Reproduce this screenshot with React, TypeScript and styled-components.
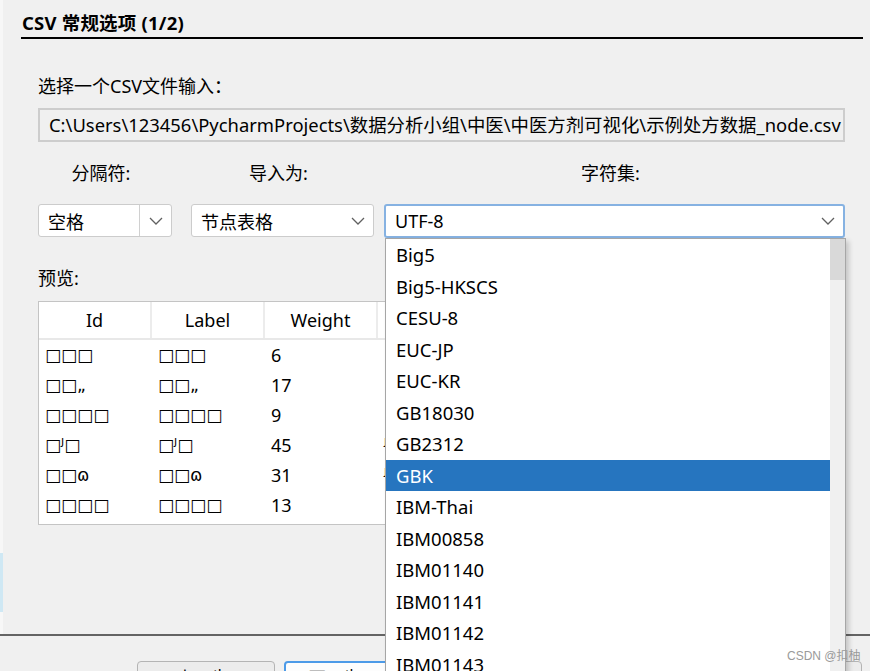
import React from 'react';
import styled, { createGlobalStyle } from 'styled-components';

const FONT = `"Noto Sans", "Noto Sans CJK SC", sans-serif`;

const GlobalStyle = createGlobalStyle`
  html, body {
    margin: 0;
    padding: 0;
    background: #f0f0f0;
  }
  body {
    font-family: ${FONT};
    color: #000;
  }
`;

const encodings = [
  'Big5',
  'Big5-HKSCS',
  'CESU-8',
  'EUC-JP',
  'EUC-KR',
  'GB18030',
  'GB2312',
  'GBK',
  'IBM-Thai',
  'IBM00858',
  'IBM01140',
  'IBM01141',
  'IBM01142',
  'IBM01143',
  'IBM01144',
];

const rows = [
  ['□□□', '□□□', '6', '□□'],
  ['□□„', '□□„', '17', '□□'],
  ['□□□□', '□□□□', '9', '□□'],
  ['□ᴶ□', '□ᴶ□', '45', 'ᴶ□'],
  ['□□ɷ', '□□ɷ', '31', 'ᴶ□'],
  ['□□□□', '□□□□', '13', '□□'],
];

const Chevron = () => (
  <svg width="14" height="8" viewBox="0 0 14 8">
    <path d="M1 1 L7 7 L13 1" fill="none" stroke="#606060" strokeWidth="1.3" />
  </svg>
);

const App: React.FC = () => {
  return (
    <Page>
      <GlobalStyle />
      <EdgeStrip>
        <EdgeGlow />
      </EdgeStrip>
      <Main>
        <Header>
          <Title>CSV 常规选项 (1/2)</Title>
        </Header>
        <Body>
          <FileLabel>选择一个CSV文件输入：</FileLabel>
          <PathField>
            C:\Users\123456\PycharmProjects\数据分析小组\中医\中医方剂可视化\示例处方数据_node.csv
          </PathField>
          <FieldRow>
            <Field $width={134} $gap={19}>
              <FieldLabel>分隔符:</FieldLabel>
              <Combo>
                <ComboText>空格</ComboText>
                <ComboButton $split>
                  <Chevron />
                </ComboButton>
              </Combo>
            </Field>
            <Field $width={183} $gap={10}>
              <FieldLabel>导入为:</FieldLabel>
              <Combo>
                <ComboText>节点表格</ComboText>
                <ComboButton>
                  <Chevron />
                </ComboButton>
              </Combo>
            </Field>
            <Field $width={461} $gap={0}>
              <FieldLabel>字符集:</FieldLabel>
              <Combo $focused>
                <ComboText>UTF-8</ComboText>
                <ComboButton>
                  <Chevron />
                </ComboButton>
              </Combo>
            </Field>
          </FieldRow>
          <PreviewLabel>预览:</PreviewLabel>
          <Table>
            <HeadRow>
              <HeadCell>Id</HeadCell>
              <HeadCell>Label</HeadCell>
              <HeadCell>Weight</HeadCell>
              <HeadCell>Type</HeadCell>
            </HeadRow>
            {rows.map((r, i) => (
              <Row key={i}>
                {r.map((c, j) => (
                  <Cell key={j} $tofu={j !== 2}>
                    {c}
                  </Cell>
                ))}
              </Row>
            ))}
          </Table>
        </Body>
      </Main>
      <Footer>
        <Button>&lt; 上一步(B)</Button>
        <Button $primary>下一步(N) &gt;</Button>
        <Button>完成(F)</Button>
        <Spacer />
        <Button>取消</Button>
      </Footer>

      <DropList>
        <Items>
          {encodings.map((e) => (
            <Item key={e} $selected={e === 'GBK'}>
              {e}
            </Item>
          ))}
        </Items>
        <ScrollTrack>
          <ScrollThumb />
        </ScrollTrack>
      </DropList>
      <Watermark>CSDN @扣柚</Watermark>
    </Page>
  );
};

export default App;

const Page = styled.div`
  position: relative;
  width: 870px;
  height: 671px;
  overflow: hidden;
  display: flex;
  flex-direction: column;
  background: #f0f0f0;
`;

const EdgeStrip = styled.div`
  position: absolute;
  left: 0;
  top: 0;
  width: 3px;
  height: 634px;
  background: #f7f7f7;
`;

const EdgeGlow = styled.div`
  margin-top: 553px;
  height: 59px;
  background: #cfe8f4;
`;

const Main = styled.div`
  flex: 1;
`;

const Header = styled.div`
  margin: 0 7px 0 21px;
  height: 25px;
  padding: 12px 0 0 1px;
  border-bottom: 2px solid #000;
`;

const Title = styled.div`
  font-size: 18.5px;
  font-weight: 700;
  line-height: 22px;
  letter-spacing: 0.2px;
`;

const Body = styled.div`
  padding: 0 25px 0 38px;
  font-size: 18px;
`;

const FileLabel = styled.div`
  margin-top: 37px;
  line-height: 20px;
`;

const PathField = styled.div`
  margin-top: 12px;
  height: 34px;
  box-sizing: border-box;
  border: 2px solid #cdcdcd;
  background: #f0f0f0;
  padding-left: 9px;
  line-height: 30px;
  font-size: 18.4px;
  white-space: nowrap;
  overflow: hidden;
`;

const FieldRow = styled.div`
  margin-top: 21px;
  display: flex;
`;

const Field = styled.div<{ $width: number; $gap: number }>`
  width: ${(p) => p.$width}px;
  margin-right: ${(p) => p.$gap}px;
  display: flex;
  flex-direction: column;
  align-items: center;
`;

const FieldLabel = styled.div`
  line-height: 20px;
  padding-right: 8px;
`;

const Combo = styled.div<{ $focused?: boolean }>`
  margin-top: 21px;
  align-self: stretch;
  height: ${(p) => (p.$focused ? 34 : 33)}px;
  box-sizing: border-box;
  display: flex;
  align-items: center;
  background: #fff;
  border: ${(p) => (p.$focused ? '2px solid #86b2e2' : '1.5px solid #cccccc')};
  border-radius: 3px;
`;

const ComboText = styled.div`
  flex: 1;
  padding-left: 9px;
  font-size: 18px;
  white-space: nowrap;
`;

const ComboButton = styled.div<{ $split?: boolean }>`
  width: 31px;
  height: 100%;
  display: flex;
  align-items: center;
  justify-content: center;
  border-left: ${(p) => (p.$split ? '1.5px solid #d0d0d0' : 'none')};
`;

const PreviewLabel = styled.div`
  margin-top: 30px;
  line-height: 20px;
`;

const Table = styled.div`
  margin-top: 13px;
  height: 224px;
  box-sizing: border-box;
  background: #fff;
  border: 1.5px solid #c4c4c4;
`;

const HeadRow = styled.div`
  display: grid;
  grid-template-columns: repeat(4, 113px);
  height: 36px;
  border-bottom: 2px solid #e8e8e8;
`;

const HeadCell = styled.div`
  border-right: 2px solid #ececec;
  display: flex;
  align-items: center;
  justify-content: center;
  font-size: 18px;
`;

const Row = styled.div`
  display: grid;
  grid-template-columns: repeat(4, 113px);
  height: 30px;
  align-items: center;
`;

const Cell = styled.div<{ $tofu: boolean }>`
  padding-left: 6px;
  font-size: ${(p) => (p.$tofu ? 17 : 18)}px;
  font-family: ${(p) => (p.$tofu ? `"DejaVu Sans", sans-serif` : FONT)};
  white-space: nowrap;
  overflow: hidden;
`;

const Footer = styled.div`
  height: 37px;
  box-sizing: border-box;
  flex-shrink: 0;
  border-top: 2px solid #646464;
  padding: 25px 8px 0 137px;
  display: flex;
  gap: 9px;
`;

const Spacer = styled.div`
  flex: 1;
`;

const Button = styled.div<{ $primary?: boolean }>`
  flex-shrink: 0;
  width: 138px;
  height: 30px;
  box-sizing: border-box;
  border: ${(p) => (p.$primary ? '2px solid #4d9be8' : '1px solid #b4b4b4')};
  border-radius: 4px;
  background: ${(p) => (p.$primary ? '#fdfdfd' : '#ececec')};
  display: flex;
  align-items: center;
  justify-content: center;
  font-size: 17px;
`;

const DropList = styled.div`
  position: absolute;
  left: 385px;
  top: 238px;
  width: 461px;
  height: 460px;
  box-sizing: border-box;
  display: flex;
  background: #fff;
  border: 1px solid #a6a6a6;
  box-shadow: 3px 3px 5px rgba(0, 0, 0, 0.18);
`;

const Items = styled.div`
  flex: 1;
`;

const Item = styled.div<{ $selected?: boolean }>`
  height: 31.5px;
  line-height: 31.5px;
  padding-left: 10px;
  font-size: 18.5px;
  background: ${(p) => (p.$selected ? '#2675bf' : 'transparent')};
  color: ${(p) => (p.$selected ? '#fff' : '#000')};
`;

const ScrollTrack = styled.div`
  width: 15px;
  background: #f0f0f0;
`;

const ScrollThumb = styled.div`
  height: 41px;
  background: #d9d9d9;
`;

const Watermark = styled.div`
  position: absolute;
  left: 787px;
  top: 648px;
  font-size: 12px;
  line-height: 16px;
  color: #9a9a9a;
  font-family: "Liberation Sans", "Noto Sans CJK SC", sans-serif;
`;
